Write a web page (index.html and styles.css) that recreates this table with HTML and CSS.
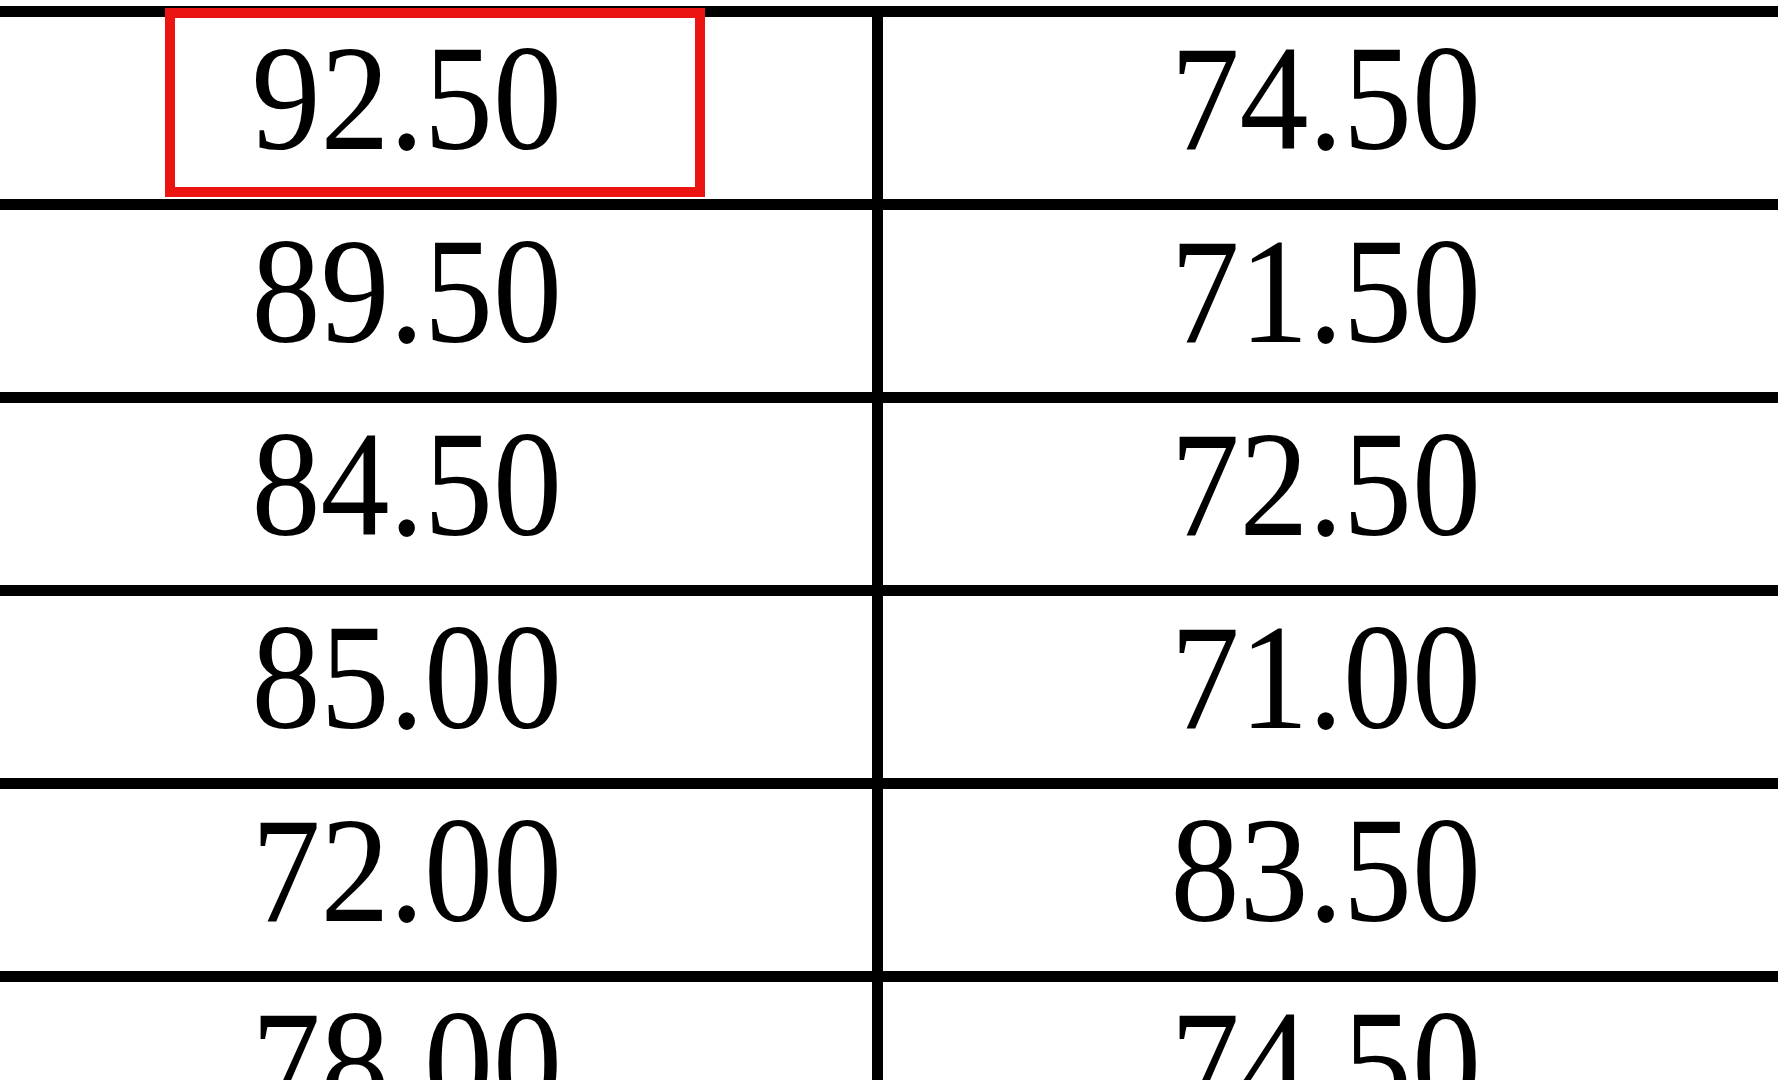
FILE: index.html
```html
<!DOCTYPE html>
<html>
<head>
<meta charset="utf-8">
<link rel="stylesheet" href="styles.css">
</head>
<body>
<div class="sheet">
  <div class="cell left first"><span class="num">92.50</span><div class="mark"></div></div>
  <div class="cell right"><span class="num">74.50</span></div>
  <div class="cell left"><span class="num">89.50</span></div>
  <div class="cell right"><span class="num">71.50</span></div>
  <div class="cell left"><span class="num">84.50</span></div>
  <div class="cell right"><span class="num">72.50</span></div>
  <div class="cell left"><span class="num">85.00</span></div>
  <div class="cell right"><span class="num">71.00</span></div>
  <div class="cell left"><span class="num">72.00</span></div>
  <div class="cell right"><span class="num">83.50</span></div>
  <div class="cell left"><span class="num">78.00</span></div>
  <div class="cell right"><span class="num">74.50</span></div>
</div>
</body>
</html>
```

FILE: styles.css
```css
html, body {
  margin: 0;
  padding: 0;
  background: #ffffff;
  overflow: hidden;
  width: 1778px;
  height: 1080px;
}
.sheet {
  display: grid;
  grid-template-columns: 943px 915px;
  grid-auto-rows: 193px;
  margin-left: -60px;
  margin-top: 6px;
  border-top: 11px solid #000;
}
.cell {
  position: relative;
  display: flex;
  align-items: center;
  justify-content: center;
  border-bottom: 11px solid #000;
  padding-bottom: 20px;
  box-sizing: border-box;
}
.left {
  border-right: 11px solid #000;
  padding-left: 2px;
}
.right {
  padding-right: 30px;
}
.num {
  display: inline-block;
  font-family: "Liberation Serif", "Times New Roman", serif;
  font-size: 150px;
  line-height: 1;
  color: #000;
  transform: scaleX(0.92);
}
.mark {
  position: absolute;
  left: 225px;
  top: -9px;
  width: 540px;
  height: 189px;
  border: 10px solid #ec1313;
  box-sizing: border-box;
}
```
